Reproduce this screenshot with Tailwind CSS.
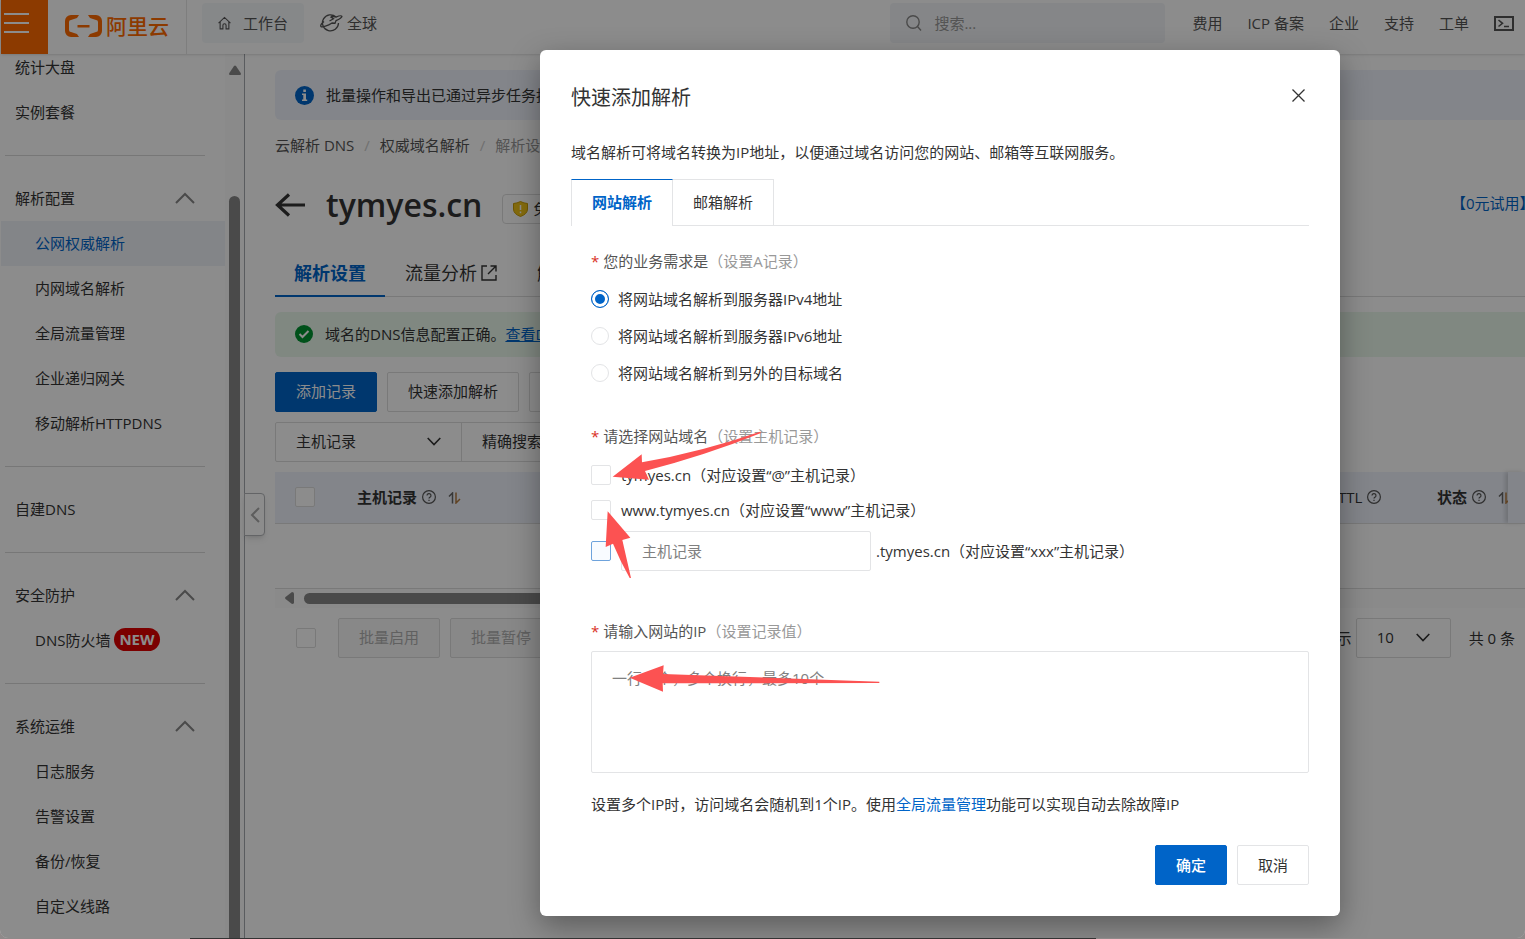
<!DOCTYPE html>
<html lang="zh-CN">
<head>
    <meta charset="UTF-8">
    <meta name="viewport" content="width=device-width, initial-scale=1.0">
    <title>云解析 DNS</title>
    <script src="https://cdn.jsdelivr.net/npm/@tailwindcss/browser@4"></script>
</head>

<body class="h-screen bg-[#8f8a8a] font-['Open_Sans','Noto_Sans_CJK_SC',sans-serif] text-[15px] leading-5 text-[#333]">
  <div class="h-full flex flex-col overflow-hidden">
    <div class="relative flex-1 min-h-0 flex flex-col bg-white rounded-b-lg overflow-hidden">

      <!-- top bar -->
      <header class="relative z-10 shrink-0 h-[54px] ml-px flex bg-white shadow-sm whitespace-nowrap text-[#555]">
        <button class="w-[47px] bg-[#ff6a00] pl-[3px] pb-2" aria-label="菜单">
          <svg class="w-[25px] h-5" viewBox="0 0 25 20" stroke="#fff" stroke-width="2"><path d="M0 1h25M0 10h25M0 19h25" /></svg>
        </button>
        <a href="#" class="flex items-center gap-1 w-[139px] pl-[17px] pb-[2px] border-r border-[#e5e5e5] text-[#ff6a00]">
          <svg class="w-[37px] h-[22px]" viewBox="0 0 37 22" fill="currentColor">
            <path d="M14 0H6a6 6 0 0 0-6 6v10a6 6 0 0 0 6 6h8l-2-3-6-2a2 2 0 0 1-2-2V7a2 2 0 0 1 2-2l6-2zM23 0h8a6 6 0 0 1 6 6v10a6 6 0 0 1-6 6h-8l2-3 6-2a2 2 0 0 0 2-2V7a2 2 0 0 0-2-2l-6-2zM12.500 10h12v2.500h-12z" />
          </svg>
          <span class="text-[21px] font-medium leading-6">阿里云</span>
        </a>
        <div class="flex-1 flex items-center pb-2 pl-[15px]">
          <a href="#" class="flex items-center gap-3 h-10 w-[102px] px-4 bg-[#f5f7fa] rounded-sm">
            <svg class="w-[14px] h-[14px]" viewBox="0 0 14 14" fill="none" stroke="currentColor" stroke-width="1.200"><path d="M.6 7.200 7 1l6.400 6.200M2.300 6v7.300h3V9.500a1.700 1.700 0 0 1 3.400 0v3.800h3V6" /></svg>
            工作台
          </a>
          <a href="#" class="flex items-center gap-1 ml-4">
            <svg class="w-[23px] h-5" viewBox="0 0 23 20" fill="none" stroke="currentColor" stroke-width="1.300">
              <path d="M16 4A8 8 0 1 0 18.500 10M4 8.500C1.500 10.500.2 12.500 1 13.500c1 1.200 7-.8 11-3.500l3 .2 1-2.500c3.500-1.700 6.300-3.600 5.900-4.400-.5-.8-3.600-.2-5.900.8l-4-.8-1 .8 2.500 1.600-4 2.300" />
            </svg>
            全球
          </a>
          <label class="flex items-center gap-3 h-10 w-[275px] ml-auto mr-[27px] px-4 bg-[#f3f5f8] rounded-sm">
            <svg class="w-4 h-4 shrink-0" viewBox="0 0 16 16" fill="none" stroke="#888" stroke-width="1.400"><circle cx="7" cy="7" r="6.200" /><path d="m11.500 11.500 3.500 4" /></svg>
            <input type="text" placeholder="搜索..." aria-label="搜索" class="w-full outline-none placeholder:text-[#999]">
          </label>
          <nav class="flex items-center gap-[25px] pr-[11px]">
            <a href="#">费用</a>
            <a href="#">ICP 备案</a>
            <a href="#">企业</a>
            <a href="#">支持</a>
            <a href="#">工单</a>
            <a href="#" aria-label="命令行">
              <svg class="w-5 h-[15px]" viewBox="0 0 20 15" fill="none" stroke="currentColor" stroke-width="2"><path d="M1 1h18v13H1z" /><path d="m4.500 4 4 3.300-4 3.200M10 10.500h5" stroke-width="1.600" /></svg>
            </a>
          </nav>
        </div>
      </header>

      <div class="flex-1 min-h-0 flex">
        <!-- side menu -->
        <aside class="relative shrink-0 w-[245px] flex border-r border-[#a4a8ae]">
          <nav class="w-[225px] pl-px overflow-hidden">
            <ul class="-mt-[9px] [&_a]:flex [&_a]:items-center [&_a]:h-[45px] [&_a]:pb-[2px] [&_a]:pl-[14px] [&_ul_a]:pl-[34px] [&_button]:flex [&_button]:items-center [&_button]:justify-between [&_button]:w-full [&_button]:h-[45px] [&_button]:pb-[2px] [&_button]:pl-[14px] [&_button]:pr-[30px]">
              <li><a href="#">统计大盘</a></li>
              <li><a href="#">实例套餐</a></li>
              <li class="h-px bg-[#d9d9d9] my-5 ml-1 mr-5"></li>
              <li>
                <button>解析配置 <svg class="w-5 h-3" viewBox="0 0 20 12" fill="none" stroke="#888" stroke-width="2"><path d="m1 11 9-9 9 9" /></svg></button>
                <ul>
                  <li class="bg-[#eff3f8] text-[#0064c8]"><a href="#">公网权威解析</a></li>
                  <li><a href="#">内网域名解析</a></li>
                  <li><a href="#">全局流量管理</a></li>
                  <li><a href="#">企业递归网关</a></li>
                  <li><a href="#">移动解析HTTPDNS</a></li>
                </ul>
              </li>
              <li class="h-px bg-[#d9d9d9] my-5 ml-1 mr-5"></li>
              <li><a href="#">自建DNS</a></li>
              <li class="h-px bg-[#d9d9d9] my-5 ml-1 mr-5"></li>
              <li>
                <button>安全防护 <svg class="w-5 h-3" viewBox="0 0 20 12" fill="none" stroke="#888" stroke-width="2"><path d="m1 11 9-9 9 9" /></svg></button>
                <ul>
                  <li><a href="#">DNS防火墙 <span class="ml-1 h-[23px] px-[5px] rounded-full bg-[#e00000] text-white font-bold leading-[23px]">NEW</span></a></li>
                </ul>
              </li>
              <li class="h-px bg-[#d9d9d9] my-5 ml-1 mr-5"></li>
              <li>
                <button>系统运维 <svg class="w-5 h-3" viewBox="0 0 20 12" fill="none" stroke="#888" stroke-width="2"><path d="m1 11 9-9 9 9" /></svg></button>
                <ul>
                  <li><a href="#">日志服务</a></li>
                  <li><a href="#">告警设置</a></li>
                  <li><a href="#">备份/恢复</a></li>
                  <li><a href="#">自定义线路</a></li>
                </ul>
              </li>
            </ul>
          </nav>
          <div class="flex-1 flex flex-col items-center bg-[#fcfcfc] pt-[11px]">
            <svg class="w-3 h-[10px]" viewBox="0 0 12 10"><path d="M5 1q1-1 2 0l5 7.500q0 1.500-1 1.500H1Q0 10 0 8.500z" fill="#888" /></svg>
            <div class="flex-1 w-[11px] mt-[121px] rounded-t-full bg-[#888]"></div>
          </div>
          <button class="absolute z-10 left-[244px] top-[439px] w-[21px] h-[43px] flex items-center justify-center bg-white border border-[#b4b6ba] rounded-r-sm shadow-md" aria-label="收起">
            <svg class="w-[10px] h-4" viewBox="0 0 10 16" fill="none" stroke="#aaa" stroke-width="2"><path d="M9 1 2 8l7 7" /></svg>
          </button>
        </aside>

        <main class="flex-1 min-w-0 pl-[30px] pt-4 overflow-hidden whitespace-nowrap">
          <div class="flex items-center gap-3 h-[50px] px-5 bg-[#eff3fc] rounded-l-md">
            <svg class="w-[19px] h-[19px]" viewBox="0 0 19 19"><circle cx="9.500" cy="9.500" r="9.500" fill="#0064c8" /><path d="M8.300 3.500h2.600v2.400H8.300zM7 7.500h4v6h1.200V15H7v-1.500h1.300V9H7z" fill="#fff" /></svg>
            批量操作和导出已通过异步任务执行
          </div>

          <nav class="flex gap-[10px] mt-[15px] h-5 text-[#555]">
            <a href="#">云解析 DNS</a><span class="text-[#ccc]">/</span>
            <a href="#">权威域名解析</a><span class="text-[#ccc]">/</span>
            <span class="text-[#999]">解析设置</span>
          </nav>

          <div class="flex items-center mt-[25px] h-[50px]">
            <svg class="w-[31px] h-6" viewBox="0 0 31 24" fill="none" stroke="#333" stroke-width="3.200"><path d="M30 12H3M14 1.500 2.500 12 14 22.500" /></svg>
            <h1 class="ml-5 text-[32px] leading-10 font-semibold">tymyes.cn</h1>
            <span class="flex items-center gap-[5px] ml-5 mt-2 h-[30px] px-[10px] border border-[#ddd] rounded-sm">
              <svg class="w-[15px] h-4" viewBox="0 0 15 16"><path d="M7.500.5Q11 2.300 14.500 2.500V8q0 5-7 7.500-7-2.500-7-7.500V2.500Q4 2.300 7.500.5z" fill="#f0c419" stroke="#c99b00" /><path d="M7.500 4v5M7.500 10.500v1.700" stroke="#fff" stroke-width="1.500" /></svg>
              免费版
            </span>
            <a href="#" class="ml-auto w-[74px] pb-1 text-[#0064c8]">【0元试用】</a>
          </div>

          <div class="flex mt-[17px] h-[50px] border-b border-[#ddd] text-[18px]">
            <button class="-mb-px px-[19px] pt-1 border-b-2 border-[#0064c8] text-[#0064c8] font-bold">解析设置</button>
            <button class="flex items-center gap-1 px-5 pt-[2px]">流量分析
              <svg class="w-4 h-4" viewBox="0 0 16 16" fill="none" stroke="currentColor" stroke-width="1.400"><path d="M6 1H1v14h14v-5M9.500 1H15v5.500M15 1 7 9" /></svg>
            </button>
            <button class="px-5 pt-[2px]">解析日志</button>
          </div>

          <div class="flex items-center mt-[15px] h-[45px] px-5 pb-px bg-[#e9f7ec] rounded-l-md">
            <svg class="w-[18px] h-[18px] mr-3" viewBox="0 0 18 18"><circle cx="9" cy="9" r="9" fill="#009431" /><path d="m4.500 9 3 3 6-6" fill="none" stroke="#fff" stroke-width="2" /></svg>
            域名的DNS信息配置正确。<a href="#" class="text-[#0064c8] underline">查看DNS信息</a>
          </div>

          <div class="flex gap-[10px] mt-[15px] [&_button]:h-10 [&_button]:px-5 [&_button]:pb-[2px] [&_button]:border [&_button]:rounded-xs">
            <button class="bg-[#0064c8] border-[#0064c8] text-white">添加记录</button>
            <button class="border-[#ddd]">快速添加解析</button>
            <button class="border-[#ddd]">导入/导出</button>
          </div>

          <div class="flex mt-[10px] h-10 w-[560px] border border-[#ddd] rounded-xs">
            <label class="relative w-[186px] border-r border-[#ddd]">
              <select class="appearance-none w-full h-full px-5 pb-[2px] outline-none" aria-label="搜索字段"><option>主机记录</option></select>
              <svg class="absolute right-5 top-[14px] w-[14px] h-[9px]" viewBox="0 0 14 9" fill="none" stroke="#333" stroke-width="1.600"><path d="m.7 1 6.300 6.500L13.300 1" /></svg>
            </label>
            <select class="appearance-none flex-1 px-5 pb-[2px] outline-none" aria-label="搜索方式"><option>精确搜索</option></select>
          </div>

          <table class="table-fixed w-full mt-[10px] text-left">
            <colgroup>
              <col class="w-[62px]"><col><col class="w-[103px]"><col class="w-[91px]"><col class="w-[17px]">
            </colgroup>
            <thead>
              <tr class="h-[51px] bg-[#eff3fc] border-b border-[#ddd]">
                <th class="pl-5"><input type="checkbox" aria-label="全选" class="block appearance-none w-5 h-5 bg-white border border-[#ddd] rounded-xs"></th>
                <th class="pl-5 pb-px">
                  <span class="flex items-center">主机记录
                    <svg class="ml-[5px] w-[14px] h-[14px]" viewBox="0 0 14 14" fill="none" stroke="#555" stroke-width="1.200"><circle cx="7" cy="7" r="6.400" /><path d="M5 5.600a2 2 0 1 1 2.800 1.800Q7 7.800 7 8.600M7 9.800v1.300" /></svg>
                    <svg class="ml-3 mt-[3px] w-[13px] h-3" viewBox="0 0 13 12" fill="none" stroke-width="1.500"><path d="M1 4.500 4.500 1v10.500" stroke="#666" /><path d="M8 .5V11l4-4" stroke="#b07a40" /></svg>
                  </span>
                </th>
                <th class="pl-6 pb-px">
                  <span class="flex items-center font-medium">TTL
                    <svg class="ml-[5px] w-[14px] h-[14px]" viewBox="0 0 14 14" fill="none" stroke="#555" stroke-width="1.200"><circle cx="7" cy="7" r="6.400" /><path d="M5 5.600a2 2 0 1 1 2.800 1.800Q7 7.800 7 8.600M7 9.800v1.300" /></svg>
                  </span>
                </th>
                <th class="pl-5 pb-px overflow-hidden">
                  <span class="flex items-center">状态
                    <svg class="shrink-0 ml-[5px] w-[14px] h-[14px]" viewBox="0 0 14 14" fill="none" stroke="#555" stroke-width="1.200"><circle cx="7" cy="7" r="6.400" /><path d="M5 5.600a2 2 0 1 1 2.800 1.800Q7 7.800 7 8.600M7 9.800v1.300" /></svg>
                    <svg class="shrink-0 ml-3 mt-[3px] w-[13px] h-3" viewBox="0 0 13 12" fill="none" stroke-width="1.500"><path d="M1 4.500 4.500 1v10.500" stroke="#666" /><path d="M8 .5V11l4-4" stroke="#b07a40" /></svg>
                  </span>
                </th>
                <th class="bg-[#eff3fc] shadow-[-3px_0_4px_rgba(0,0,0,0.15)]"></th>
              </tr>
            </thead>
            <tbody>
              <tr class="h-[65px] border-b border-[#ddd]"><td colspan="5"></td></tr>
            </tbody>
          </table>
          <div class="flex items-center gap-[10px] h-[19px] pl-[10px] bg-[#fcfcfc]">
            <svg class="w-[9px] h-3" viewBox="0 0 9 12"><path d="M.5 5Q-.3 6 .5 7L7 12q2 0 2-1.500v-9Q9 0 7 0z" fill="#888" /></svg>
            <div class="w-[800px] h-[11px] rounded-full bg-[#888]"></div>
          </div>

          <div class="flex items-center mt-[10px] h-10 pr-[10px]">
            <input type="checkbox" aria-label="全选本页" class="appearance-none w-5 h-5 ml-[21px] mr-[22px] border border-[#ddd] rounded-xs">
            <button disabled class="h-10 px-5 pb-[2px] mr-[10px] bg-[#f7f7f7] border border-[#ddd] rounded-xs text-[#b0b0b0]">批量启用</button>
            <button disabled class="h-10 px-5 pb-[2px] bg-[#f7f7f7] border border-[#ddd] rounded-xs text-[#b0b0b0]">批量暂停</button>
            <label class="relative flex items-center gap-1 ml-auto mr-[18px]">每页显示
              <select class="appearance-none w-[95px] h-10 px-5 pb-[2px] border border-[#ddd] rounded-xs outline-none"><option>10</option></select>
              <svg class="absolute right-[21px] top-[15px] w-[14px] h-[9px]" viewBox="0 0 14 9" fill="none" stroke="#333" stroke-width="1.600"><path d="m.7 1 6.300 6.500L13.300 1" /></svg>
            </label>
            <span>共 0 条</span>
          </div>
        </main>
      </div>

      <!-- quick add dialog -->
      <div class="absolute z-20 inset-0 bg-black/45 pt-[50px] pl-[540px]">
        <div role="dialog" aria-labelledby="dlgTitle" class="relative w-[800px] px-[31px] pt-8 pb-[31px] bg-white rounded-md shadow-[0_10px_30px_rgba(0,0,0,0.35)]">
          <div class="flex items-center justify-between h-8">
            <h2 id="dlgTitle" class="text-[20px] leading-8">快速添加解析</h2>
            <button class="mr-1 pb-[5px]" aria-label="关闭">
              <svg class="w-[13px] h-[13px]" viewBox="0 0 13 13" stroke="#333" stroke-width="1.300"><path d="m.5.5 12 12M12.500.5l-12 12" /></svg>
            </button>
          </div>
          <p class="mt-7">域名解析可将域名转换为IP地址，以便通过域名访问您的网站、邮箱等互联网服务。</p>

          <div class="flex mt-[17px] h-[47px] border-b border-[#e3e4e6]">
            <button class="-mb-px px-5 pb-[2px] bg-white border-x border-t border-x-[#e3e4e6] border-t-[#0064c8] text-[#0064c8] font-bold">网站解析</button>
            <button class="px-5 pb-[2px] border-t border-r border-[#e3e4e6]">邮箱解析</button>
          </div>

          <form class="pl-5">
            <fieldset class="mt-[25px]">
              <legend class="text-[#555]"><span class="text-[#d93026]">*</span> 您的业务需求是<span class="text-[#999]">（设置A记录）</span></legend>
              <div class="flex flex-col gap-[17px] mt-[18px]">
                <label class="flex items-center gap-[9px]"><input type="radio" name="need" checked class="appearance-none w-[18px] h-[18px] rounded-full border border-[#e3e4e6] checked:border-[#0064c8] checked:bg-[#0064c8] checked:shadow-[inset_0_0_0_3px_#fff]">将网站域名解析到服务器IPv4地址</label>
                <label class="flex items-center gap-[9px]"><input type="radio" name="need" class="appearance-none w-[18px] h-[18px] rounded-full border border-[#e3e4e6]">将网站域名解析到服务器IPv6地址</label>
                <label class="flex items-center gap-[9px]"><input type="radio" name="need" class="appearance-none w-[18px] h-[18px] rounded-full border border-[#e3e4e6]">将网站域名解析到另外的目标域名</label>
              </div>
            </fieldset>

            <fieldset class="mt-[43px]">
              <legend class="text-[#555]"><span class="text-[#d93026]">*</span> 请选择网站域名<span class="text-[#999]">（设置主机记录）</span></legend>
              <label class="flex items-center gap-[10px] mt-[19px]"><input type="checkbox" class="appearance-none w-5 h-5 border border-[#e3e4e6] rounded-xs">tymyes.cn（对应设置“@”主机记录）</label>
              <label class="flex items-center gap-[10px] mt-[15px]"><input type="checkbox" class="appearance-none w-5 h-5 border border-[#e3e4e6] rounded-xs">www.tymyes.cn（对应设置“www”主机记录）</label>
              <div class="flex items-center mt-[11px]">
                <input id="custom" type="checkbox" class="appearance-none w-5 h-5 mr-[10px] bg-[#f8fbff] border border-[#6ea3dc] rounded-xs">
                <input type="text" placeholder="主机记录" aria-label="主机记录" class="w-[250px] h-10 px-5 mr-[5px] border border-[#e3e4e6] rounded-xs outline-none placeholder:text-[#808080]">
                <label for="custom">.tymyes.cn（对应设置“xxx”主机记录）</label>
              </div>
            </fieldset>

            <label for="ips" class="block mt-[50px] text-[#555]"><span class="text-[#d93026]">*</span> 请输入网站的IP<span class="text-[#999]">（设置记录值）</span></label>
            <textarea id="ips" placeholder="一行一个，多个换行，最多10个" class="block w-full h-[122px] mt-[10px] px-5 py-4 border border-[#e3e4e6] rounded-xs resize-none outline-none placeholder:text-[#808080]"></textarea>
            <p class="mt-[21px]">设置多个IP时，访问域名会随机到1个IP。使用<a href="#" class="text-[#0064c8]">全局流量管理</a>功能可以实现自动去除故障IP</p>

            <div class="flex justify-end gap-[10px] mt-[31px]">
              <button type="button" class="h-10 px-5 bg-[#0064c8] border border-[#0064c8] rounded-xs text-white font-medium">确定</button>
              <button type="button" class="h-10 px-5 border border-[#e3e4e6] rounded-xs">取消</button>
            </div>
          </form>

          <!-- hint arrows -->
          <svg class="absolute left-0 top-[350px] w-[400px] h-[300px] pointer-events-none" viewBox="0 0 1200 900" fill="#fc5252">
            <path d="M218 230 305 163l1 24q180-32 354-92l3 4Q500 165 315 213l12 26z" />
            <path d="m203 334 68 79-24 7 26 114h-4q-28-50-50-103l-22 10z" />
            <path d="m269 833 102-37-2 26 649 23v4l-650 1 1 25z" />
          </svg>
        </div>
      </div>
    </div>
    <div class="shrink-0 h-px pl-[190px]"><div class="w-[906px] h-px bg-[#333]"></div></div>
  </div>
</body>
</html>
